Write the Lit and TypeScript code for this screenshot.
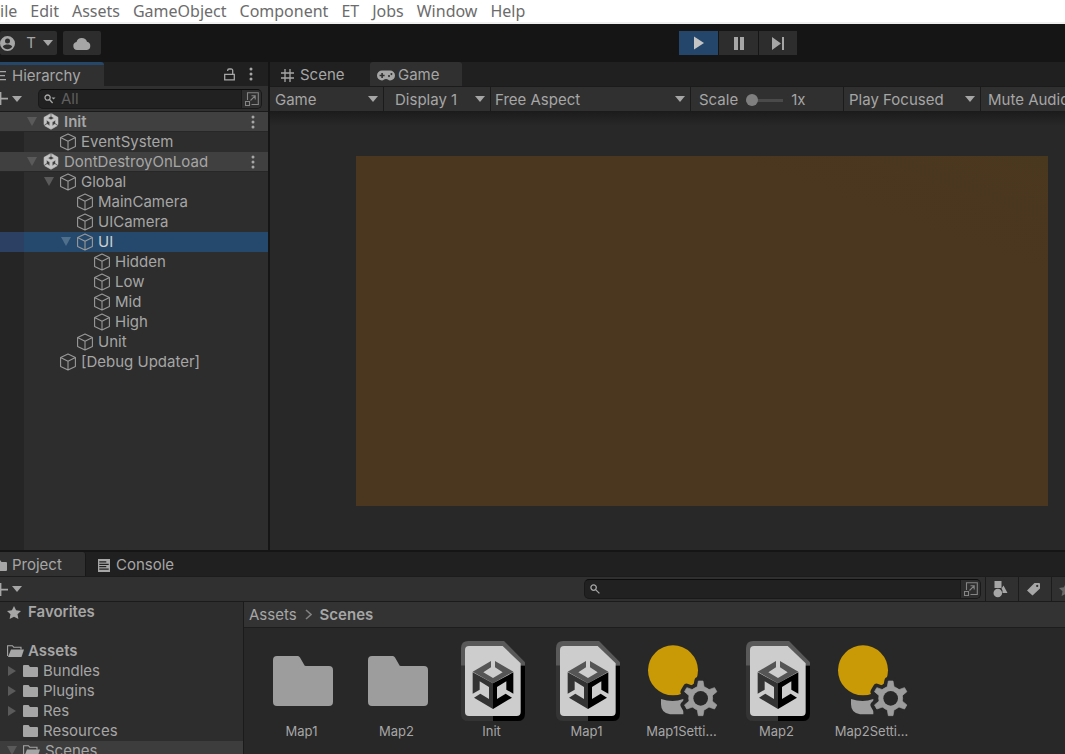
import { LitElement, html, svg, css, nothing, type TemplateResult } from "lit";
import { customElement, state } from "lit/decorators.js";
import { classMap } from "lit/directives/class-map.js";
import { styleMap } from "lit/directives/style-map.js";

const icon = (w: number, h: number, box: string, body: unknown, cls = "") =>
  html`<svg class="icon ${cls}" width=${w} height=${h} viewBox=${box} fill="currentColor" aria-hidden="true">${body}</svg>`;

const UNITY_MARK =
  "m12.9288 4.2939 3.7997 2.1929c.1366.077.1415.2905 0 .3675l-4.515 2.6076a.4192.4192 0 0 1-.4246 0L7.274 6.8543c-.139-.0745-.1415-.293 0-.3675l3.7972-2.193V0L1.3758 5.5977V16.793l3.7177-2.1456v-4.3858c-.0025-.1565.1813-.2682.318-.1838l4.5148 2.6076a.4252.4252 0 0 1 .2136.3676v5.2127c.0025.1565-.1813.2682-.3179.1838l-3.7996-2.1929-3.7178 2.1457L12 24l9.6954-5.5977-3.7178-2.1457-3.7996 2.1929c-.1341.082-.3229-.0248-.3179-.1838V13.053c0-.1565.087-.2956.2136-.3676l4.5149-2.6076c.134-.082.3228.0224.3179.1838v4.3858l3.7177 2.1456V5.5977L12.9288 0Z";

const caret = () => icon(10, 6, "0 0 10 6", svg`<path d="M0 0h10L5 6z"/>`);
const foldDown = () => icon(12, 10, "0 0 12 10", svg`<path d="M1 0h10L6 9z"/>`, "fold");
const foldRight = () => icon(12, 10, "0 0 12 10", svg`<path d="M2 0v10l8-5z"/>`, "fold");
const plus = () => icon(8, 13, "0 0 8 13", svg`<path d="M0 5.8h8v1.6H0zM0 0h1.4v13H0z"/>`);
const kebab = () =>
  icon(4, 14, "0 0 4 14", svg`<circle cx="2" cy="2" r="1.5"/><circle cx="2" cy="7" r="1.5"/><circle cx="2" cy="12" r="1.5"/>`);
const sceneMark = () =>
  icon(18, 17, "-1 -1 26 26", svg`<path stroke="currentColor" stroke-width=".9" d=${UNITY_MARK}/>`, "bright");
const cube = () =>
  icon(18, 18, "0 0 18 18", svg`<path d="M9 1 16.4 4.400V13.400L9 17 1.600 13.400V4.400zM1.600 4.400 9 8.200 16.400 4.400M9 8.200v8.800" fill="none" stroke="currentColor" stroke-width="1.100" stroke-linejoin="round"/>`, "cube");
const user = () =>
  icon(15, 15, "0 0 15 15", svg`<path fill-rule="evenodd" d="M7.5 0a7.5 7.5 0 1 0 0 15 7.5 7.5 0 0 0 0-15zM7.5 2.6a2.5 2.5 0 1 1 0 5 2.5 2.5 0 0 1 0-5zM2.8 10.6c1-1.4 2.8-2 4.7-2s3.700.6 4.700 2c-1 1.700-2.700 2.700-4.700 2.700s-3.700-1-4.700-2.700z"/>`);
const cloud = () =>
  icon(18, 13, "0 0 18 13", svg`<path d="M4 13a4 4 0 0 1-.5-7.900A5.500 5.500 0 0 1 14 4.800 4.200 4.200 0 0 1 14 13z"/>`);
const playGlyph = () => icon(12, 14, "0 0 12 14", svg`<path d="M1 .5 11 7 1 13.500z"/>`);
const pauseGlyph = () => icon(10, 13, "0 0 10 13", svg`<path d="M0 0h4v13H0zM6 0h4v13H6z"/>`);
const stepGlyph = () => icon(12, 13, "0 0 12 13", svg`<path d="M0 0l9 6.500L0 13zM10 0h2v13h-2z"/>`);
const lines = () => icon(6, 10, "0 0 6 10", svg`<path d="M0 0h6v1.300H0zM0 4h5v1.300H0zM0 8h6v1.300H0z"/>`);
const lock = () =>
  icon(11, 13, "0 0 11 13", svg`<path d="M.7 6.300h9.600v5.500H.7zM8.700 6V2.600Q8.700 1 7 1H5Q3.700 1 3.700 2.200V3" fill="none" stroke="currentColor" stroke-width="1.300"/>`);
const loupeMenu = () =>
  icon(12, 10, "0 0 12 10", svg`<g fill="none" stroke="currentColor" stroke-width="1.300"><circle cx="3.600" cy="3.600" r="2.600"/><path d="M5.500 5.500 8.600 9"/></g><path d="M7.500 3.500h4l-2 2z"/>`);
const loupe = () =>
  icon(10, 10, "0 0 10 10", svg`<g fill="none" stroke="currentColor" stroke-width="1.300"><circle cx="3.600" cy="3.600" r="2.700"/><path d="M5.600 5.600 9.400 9.400"/></g>`);
const expand = () =>
  icon(14, 14, "0 0 14 14", svg`<g fill="none" stroke="currentColor"><path d="M2.500 8V.700H13.300V12.500H6.500M.500 9.500h4v4h-4zM5.500 8.500 9.800 4.200M6.500 3.800H10.200V7.500" stroke-width="1.100"/></g>`);
const gridGlyph = () =>
  icon(13, 13, "0 0 13 13", svg`<path d="M4 0v13M9 0v13M0 4h13M0 9h13" stroke="currentColor" stroke-width="1.300"/>`);
const gamepad = () =>
  icon(18, 11, "0 0 18 11", svg`<path fill-rule="evenodd" d="M5 0.500h8A5 5 0 0 1 13 10.500C11.500 10.500 11 9 9 9S6.500 10.500 5 10.500A5 5 0 0 1 5 .500zM4.300 3v1.700H2.600v1.600h1.700V8h1.600V6.300h1.700V4.700H5.900V3zM14.400 3a1 1 0 1 0 .01 0zM12 5a1 1 0 1 0 .01 0z"/>`);
const folder = () => icon(15, 12, "0 0 15 12", svg`<path d="M0 1Q0 0 1 0h4.500L7 2h7q1 0 1 1v8q0 1-1 1H1q-1 0-1-1z"/>`);
const folderEdge = () => icon(7, 11, "0 0 7 11", svg`<path d="M0 0 1.500 2H6q1 0 1 1v7q0 1-1 1H0z"/>`);
const folderOpen = () =>
  icon(17, 12, "0 0 17 12", svg`<path d="M.600 11V.700H5.400L6.700 2.200H14V4.500" fill="none" stroke="currentColor" stroke-width="1.100"/><path d="M4 4.600h13L14.500 12H1z"/>`);
const consoleGlyph = () =>
  icon(12, 13, "0 0 12 13", svg`<path fill-rule="evenodd" d="M0 0h12v13H0zM1.300 2.300v1.200h7V2.300zM1.300 4.700v1.200h9.400V4.700zM1.300 7.100v1.200h7V7.100zM1.300 9.600v1.200h9.400V9.600z"/>`);
const star = () =>
  icon(14, 13, "0 0 14 13", svg`<path d="M7 0 9.100 4.300 14 4.900 10.500 8.200 11.400 13 7 10.700 2.600 13 3.500 8.200 0 4.900 4.900 4.300z"/>`);
const shapes = () =>
  icon(15, 17, "0 0 15 17", svg`<path d="M1.500 0h7v7h-7zM10.500 4.500 14.500 12H9.500Q10 9 8.500 7.500z"/><circle cx="4.800" cy="12" r="4.300"/>`);
const tag = () =>
  icon(13, 13, "0 0 13 13", svg`<path fill-rule="evenodd" d="M7.500 0H12q1 0 1 1V5.500L5.500 12.600 0 7.500zM10.200 1.800a1.100 1.100 0 1 0 .01 0z"/>`);
const chevron = () => icon(7, 11, "0 0 7 11", svg`<path d="M1 1 6 5.500 1 10" fill="none" stroke="#808080" stroke-width="1.600"/>`);

const bigFolder = () =>
  icon(60, 50, "0 0 60 50", svg`<path fill="#9d9d9d" d="M4 0H25Q26 0 27 1.500L31 8.500Q31.500 10 33 10H56Q60 10 60 14V46Q60 50 56 50H4Q0 50 0 46V4Q0 0 4 0z"/>`);

const bigScene = () =>
  icon(64, 80, "48 63 192 240", svg`
    <path fill="#595959" d="M48 137V85Q48 63 70 63H177L240 127V137z"/>
    <path fill="#343434" d="M48 137H144V303H70Q48 303 48 281z"/>
    <path fill="#000" d="M144 137H240V281Q240 303 218 303H144z"/>
    <path fill="#cdcdcd" d="M72 78H173L227 130V276Q227 288 215 288H72Q60 288 60 276V90Q60 78 72 78z"/>
    <path fill="#555" d="M83 155 138 123V142L115 157 144 174 173 157 150 142V123L205 155 144 190z"/>
    <path fill="#333" d="M83 157 144 190V267L87 233 106 221 132 237V201L104 184V209L83 221z"/>
    <path fill="#000" d="M205 157 144 190V267L201 233 182 221 156 237V201L184 184V209L205 221z"/>`);

const TOOTH = "M471 206 475 184H489L493 206z";
const bigSettings = () =>
  icon(70, 72, "324 76 210 216", svg`
    <circle cx="399" cy="152" r="75" fill="#c99a06"/>
    <path fill="#9d9d9d" d="M363 238Q399 250 430 238V284H390Q363 280 363 254z"/>
    <g fill="#282828" stroke="#282828" stroke-width="24" stroke-linejoin="round">
      <circle cx="482" cy="236" r="36"/>
      ${[0, 60, 120, 180, 240, 300].map((a) => svg`<path d=${TOOTH} transform="rotate(${a} 482 236)"/>`)}
    </g>
    <g fill="#9d9d9d" stroke="#9d9d9d" stroke-width="2" stroke-linejoin="round">
      <circle cx="482" cy="236" r="36"/>
      ${[0, 60, 120, 180, 240, 300].map((a) => svg`<path d=${TOOTH} transform="rotate(${a} 482 236)"/>`)}
    </g>
    <circle cx="482" cy="236" r="22" fill="#282828"/>`);

interface TreeRow {
  name: string;
  depth: number;
  scene?: boolean;
  open?: boolean;
  bold?: boolean;
}

const HIERARCHY: TreeRow[] = [
  { name: "Init", depth: 0, scene: true, open: true, bold: true },
  { name: "EventSystem", depth: 1 },
  { name: "DontDestroyOnLoad", depth: 0, scene: true, open: true },
  { name: "Global", depth: 1, open: true },
  { name: "MainCamera", depth: 2 },
  { name: "UICamera", depth: 2 },
  { name: "UI", depth: 2, open: true },
  { name: "Hidden", depth: 3 },
  { name: "Low", depth: 3 },
  { name: "Mid", depth: 3 },
  { name: "High", depth: 3 },
  { name: "Unit", depth: 2 },
  { name: "[Debug Updater]", depth: 1 },
];

const FOLDERS = [
  { name: "Bundles", fold: "closed" },
  { name: "Plugins", fold: "closed" },
  { name: "Res", fold: "closed" },
  { name: "Resources", fold: "none" },
  { name: "Scenes", fold: "open" },
];

const ASSETS: { name: string; art: () => TemplateResult }[] = [
  { name: "Map1", art: bigFolder },
  { name: "Map2", art: bigFolder },
  { name: "Init", art: bigScene },
  { name: "Map1", art: bigScene },
  { name: "Map1Setti...", art: bigSettings },
  { name: "Map2", art: bigScene },
  { name: "Map2Setti...", art: bigSettings },
];

const MENUS = ["ile", "Edit", "Assets", "GameObject", "Component", "ET", "Jobs", "Window", "Help"];

const shared = css`
  :host { box-sizing: border-box; }
  *, *::before, *::after { box-sizing: border-box; }
  .icon { display: block; flex: none; }
  button, input, select {
    font: inherit; color: inherit; border: 0; margin: 0; padding: 0;
    background: none; border-radius: 0; appearance: none; outline: none;
  }
  button { display: flex; align-items: center; justify-content: center; }
  .tabs { display: flex; height: 24px; background: #202020; }
  .tab { display: flex; align-items: center; gap: 6px; padding-top: 2px; white-space: nowrap; }
  .tab.on { background: #303030; }
  .bar { display: flex; align-items: center; background: #303030; }
  .add { gap: 4px; height: 24px; }
  .search {
    display: flex; align-items: center; height: 20px; background: #212121;
    border: 1px solid #191919; border-top-color: #0d0d0d; border-radius: 5px; overflow: hidden;
  }
  .search label { padding: 0 5px; }
  .search input { flex: 1; min-width: 0; }
  .search input::placeholder { color: #5f5f5f; opacity: 1; }
  .search button { width: 20px; height: 18px; background: #2e2e2e; color: #858585; border-left: 1px solid #191919; }
  .fold { color: #5a5a5a; }
  .row { display: flex; align-items: center; height: 20px; white-space: nowrap; }
  .grow { flex: 1; min-width: 0; }
`;

@customElement("hierarchy-panel")
export class HierarchyPanel extends LitElement {
  @state() private selected = "UI";

  static styles = [
    shared,
    css`
      :host { display: flex; flex-direction: column; background: #2d2d2d; min-height: 0; overflow: hidden; }
      .tab.on { width: 104px; padding-top: 0; border-top: 3px solid #24476a; border-radius: 0 3px 0 0; }
      .tools { display: flex; align-items: center; gap: 14px; padding-right: 15px; }
      .bar { height: 26px; border-bottom: 1px solid #1b1b1b; padding-right: 6px; gap: 16px; }
      .search { flex: 1; min-width: 0; }
      .tree {
        flex: 1; list-style: none; margin: 0; padding: 0;
        background: linear-gradient(to right, #252525 24px, #2d2d2d 24px);
      }
      .row { gap: 4px; padding-right: 13px; }
      .scene { background: #404040; border-bottom: 1px solid #272727; }
      .picked { background: linear-gradient(to right, #2b4063 24px, #24496c 24px); color: #d0d0d0; }
      .picked .fold { color: #4f6f8b; }
      .cube { color: #999; }
      .bright { color: #c4c4c4; }
      .slot { width: 12px; flex: none; }
      .bold { font-weight: 600; }
      .name { flex: 1; }
    `,
  ];

  render() {
    return html`
      <div class="tabs">
        <div class="tab on">${lines()}<span>Hierarchy</span></div>
        <div class="grow"></div>
        <div class="tools">
          <button aria-label="Lock">${lock()}</button>
          <button aria-label="Panel menu">${kebab()}</button>
        </div>
      </div>
      <div class="bar">
        <button class="add" aria-label="Create">${plus()}${caret()}</button>
        <div class="search">
          <label for="find" aria-label="Search objects">${loupeMenu()}</label>
          <input id="find" type="text" placeholder="All" />
          <button aria-label="Open search window">${expand()}</button>
        </div>
      </div>
      <ul class="tree" role="tree">
        ${HIERARCHY.map(
          (r) => html`<li
            role="treeitem"
            class=${classMap({ row: true, scene: !!r.scene, picked: r.name === this.selected })}
            style=${styleMap({ paddingLeft: `${26 + 17 * r.depth}px` })}
            @click=${() => (this.selected = r.name)}
          >
            <span class="slot">${r.open ? foldDown() : nothing}</span>
            ${r.scene ? sceneMark() : cube()}
            <span class=${classMap({ name: true, bold: !!r.bold })}>${r.name}</span>
            ${r.scene ? html`<button aria-label="Scene menu">${kebab()}</button>` : nothing}
          </li>`
        )}
      </ul>
    `;
  }
}

@customElement("game-panel")
export class GamePanel extends LitElement {
  static styles = [
    shared,
    css`
      :host { display: flex; flex-direction: column; background: #282828; min-width: 0; min-height: 0; overflow: hidden; }
      .tab { width: 92px; padding-left: 7px; }
      .tab.first { width: 100px; padding-left: 11px; }
      .tab.on { gap: 3px; border-radius: 3px 3px 0 0; }
      .bar { height: 26px; border-top: 1px solid #1b1b1b; border-bottom: 1px solid #1b1b1b; overflow: hidden; }
      .cell { display: grid; align-items: center; flex: none; height: 24px; border-right: 1px solid #1b1b1b; white-space: nowrap; }
      .cell > * { grid-area: 1 / 1; }
      .cell select { width: 100%; height: 24px; padding: 2px 0 0 5px; }
      .cell .icon { justify-self: end; margin-right: 5px; pointer-events: none; }
      .mode { width: 114px; }
      .display { width: 107px; }
      .display select { padding-left: 11px; }
      .aspect { width: 200px; }
      .aspect select { padding-left: 4px; }
      .focus { width: 137px; }
      .scale { display: flex; width: 153px; padding: 2px 0 0 8px; gap: 8px; }
      .mute { flex: none; padding: 2px 0 0 7px; white-space: nowrap; }
      input[type="range"] { width: 37px; height: 12px; background: linear-gradient(#4a4a4a, #4a4a4a) center / 100% 3px no-repeat; }
      input[type="range"]::-webkit-slider-thumb { appearance: none; width: 12px; height: 12px; border-radius: 50%; background: #7f7f7f; }
      .stage {
        flex: 1; display: flex; padding: 44px 17px 44px 86px; min-height: 0;
        background: linear-gradient(#1c1c1c, #282828 14px);
      }
      .view { flex: 1; background: linear-gradient(20deg, #4b3620 80%, #4a381e); }
    `,
  ];

  private pick(cls: string, label: string, value: string) {
    return html`<div class="cell ${cls}">
      <select aria-label=${label}><option>${value}</option></select>${caret()}
    </div>`;
  }

  render() {
    return html`
      <div class="tabs">
        <div class="tab first">${gridGlyph()}<span>Scene</span></div>
        <div class="tab on">${gamepad()}<span>Game</span></div>
      </div>
      <div class="bar">
        ${this.pick("mode", "View mode", "Game")} ${this.pick("display", "Display", "Display 1")}
        ${this.pick("aspect", "Aspect", "Free Aspect")}
        <div class="cell scale">
          <label for="scale">Scale</label>
          <input id="scale" type="range" min="1" max="5" value="1" />
          <span>1x</span>
        </div>
        ${this.pick("focus", "Play mode", "Play Focused")}
        <button class="mute">Mute Audio</button>
      </div>
      <div class="stage"><div class="view"></div></div>
    `;
  }
}

@customElement("project-panel")
export class ProjectPanel extends LitElement {
  static styles = [
    shared,
    css`
      :host { display: flex; flex-direction: column; border-top: 2px solid #151515; background: #2d2d2d; min-height: 0; overflow: hidden; }
      .tabs { flex: none; }
      .tab { padding-left: 12px; }
      .tab.on { width: 86px; padding-left: 0; gap: 5px; border-right: 1px solid #181818; border-radius: 0 3px 0 0; }
      .bar { flex: none; height: 26px; border-top: 1px solid #1c1c1c; border-bottom: 1px solid #1b1b1b; overflow: hidden; }
      .search { width: 397px; margin-right: 4px; }
      .tool { width: 33px; height: 24px; flex: none; padding-right: 3px; border-left: 1px solid #1c1c1c; }
      .tool.last { width: 14px; justify-content: flex-start; padding-left: 7px; overflow: hidden; color: #6a6a6a; }
      .body { flex: 1; display: grid; grid-template-columns: 244px minmax(0, 1fr); min-height: 0; }
      .side { border-right: 1px solid #1b1b1b; overflow: hidden; }
      .row { gap: 4px; padding-left: 7px; }
      .row.top { font-weight: 600; }
      .favorites { margin-bottom: 19px; gap: 7px; }
      .child { padding-left: 6px; gap: 5px; }
      .slot { width: 12px; flex: none; }
      .current { background: #3d3d3d; }
      .main { background: #282828; min-width: 0; overflow: hidden; }
      .crumbs { display: flex; align-items: center; gap: 8px; height: 26px; padding-left: 5px; background: #333; border-bottom: 1px solid #1d1d1d; }
      .crumbs a { color: inherit; text-decoration: none; }
      .crumbs b { font-weight: 600; }
      .assets { display: flex; flex-wrap: wrap; list-style: none; margin: 0; padding: 13px 0 0 11px; }
      .asset { display: flex; flex-direction: column; align-items: center; width: 95px; }
      .art { display: flex; align-items: center; justify-content: center; height: 80px; }
      .asset span { font-size: 13px; line-height: 20px; padding-right: 2px; }
    `,
  ];

  render() {
    return html`
      <div class="tabs">
        <div class="tab on">${folderEdge()}<span>Project</span></div>
        <div class="tab">${consoleGlyph()}<span>Console</span></div>
      </div>
      <div class="bar">
        <button class="add" aria-label="Create asset">${plus()}${caret()}</button>
        <div class="grow"></div>
        <div class="search">
          <label for="find" aria-label="Search assets">${loupe()}</label>
          <input id="find" type="text" />
          <button aria-label="Open search window">${expand()}</button>
        </div>
        <button class="tool" aria-label="Search by type">${shapes()}</button>
        <button class="tool" aria-label="Search by label">${tag()}</button>
        <button class="tool last" aria-label="Save search">${star()}</button>
      </div>
      <div class="body">
        <div class="side">
          <div class="row top favorites">${star()}<span>Favorites</span></div>
          <div class="row top">${folderOpen()}<span>Assets</span></div>
          ${FOLDERS.map(
            (f) => html`<div class=${classMap({ row: true, child: true, current: f.fold === "open" })}>
              <span class="slot">${f.fold === "closed" ? foldRight() : f.fold === "open" ? foldDown() : nothing}</span>
              ${f.fold === "open" ? folderOpen() : folder()}<span>${f.name}</span>
            </div>`
          )}
        </div>
        <div class="main">
          <div class="crumbs"><a href="#assets">Assets</a>${chevron()}<b>Scenes</b></div>
          <ul class="assets">
            ${ASSETS.map((a) => html`<li class="asset"><div class="art">${a.art()}</div><span>${a.name}</span></li>`)}
          </ul>
        </div>
      </div>
    `;
  }
}

@customElement("app-root")
export class AppRoot extends LitElement {
  static styles = [
    shared,
    css`
      :host {
        display: grid; grid-template-rows: auto auto minmax(0, 1fr) 204px; height: 100vh; overflow: hidden;
        background: #151515; color: #a6a6a6; font: 15px/20px Inter, "Liberation Sans", sans-serif;
      }
      .menu {
        display: flex; gap: 13px; height: 24px; background: #fff; border-bottom: 2px solid #f0f0f0;
        font: 16px/22px "Noto Sans", "Open Sans", sans-serif; color: #6c6c6c;
      }
      .toolbar { display: flex; align-items: center; height: 38px; padding-right: 268px; background: #151515; }
      .btn { height: 24px; background: #2d2d2d; border-radius: 2px; }
      .account { width: 57px; gap: 7px; justify-content: flex-start; margin-right: 6px; }
      .account span { width: 14px; text-align: right; }
      .cloud { width: 38px; }
      .play { display: flex; gap: 1px; }
      .play .btn { width: 39px; border-radius: 0; }
      .play .btn:last-child { width: 38px; }
      .play .active { background: #24466a; color: #c4c4c4; }
      .work { display: grid; grid-template-columns: 268px minmax(0, 1fr); gap: 2px; min-height: 0; }
    `,
  ];

  @state() private playing = true;

  render() {
    return html`
      <nav class="menu">${MENUS.map((m) => html`<button>${m}</button>`)}</nav>
      <div class="toolbar">
        <button class="btn account" aria-label="Account">${user()}<span>T</span>${caret()}</button>
        <button class="btn cloud" aria-label="Cloud services">${cloud()}</button>
        <div class="grow"></div>
        <div class="play">
          <button class=${classMap({ btn: true, active: this.playing })} aria-label="Play" @click=${() => (this.playing = !this.playing)}>
            ${playGlyph()}
          </button>
          <button class="btn" aria-label="Pause">${pauseGlyph()}</button>
          <button class="btn" aria-label="Step">${stepGlyph()}</button>
        </div>
      </div>
      <div class="work">
        <hierarchy-panel></hierarchy-panel>
        <game-panel></game-panel>
      </div>
      <project-panel></project-panel>
    `;
  }
}
